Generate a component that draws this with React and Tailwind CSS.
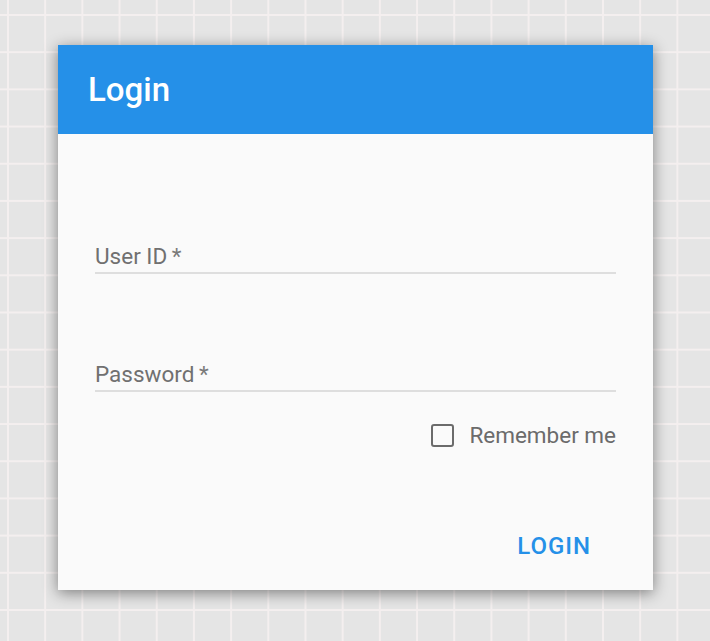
import React from 'react';

const Field = ({ label, className }) => (
  <div className={`border-b-2 border-[#dedede] pb-[3px] ${className}`}>
    <span className="block text-[22.5px] leading-[26px] text-[#707070]">
      {label}
      <span className="text-[#7a7a7a]">{'\u2009*'}</span>
    </span>
  </div>
);

export default function App() {
  return (
    <div className="w-[710px] h-[641px] overflow-hidden bg-[#e5e5e5] bg-[linear-gradient(to_right,#f4efef_2px,transparent_2px),linear-gradient(to_bottom,#f4efef_2px,transparent_2px)] bg-[size:37.2px_37.2px] bg-[position:7px_14px] pt-[45px] pl-[58px] font-['Roboto',sans-serif]">
      <div className="w-[595px] h-[545px] bg-[#fafafa] shadow-[0_3px_14px_rgba(0,0,0,0.45)] flex flex-col">
        <div className="h-[89px] bg-[#2590e8] px-[30px] flex items-center">
          <h1 className="text-[33px] font-medium text-white leading-none">Login</h1>
        </div>
        <div className="flex-1 flex flex-col px-[37px] pt-[109px]">
          <Field label="User ID" />
          <Field label="Password" className="mt-[87px]" />
          <div className="mt-[30px] flex items-center justify-end gap-[15px]">
            <span className="w-[23px] h-[23px] rounded-[3px] border-[2.5px] border-[#6b6b6b]" />
            <span className="text-[22.5px] leading-[26px] text-[#6b6b6b]">Remember me</span>
          </div>
          <div className="mt-auto mb-[30px] flex justify-end pr-[25px]">
            <button className="text-[24px] font-medium tracking-[0.04em] text-[#2590e8] leading-[28px]">LOGIN</button>
          </div>
        </div>
      </div>
    </div>
  );
}
